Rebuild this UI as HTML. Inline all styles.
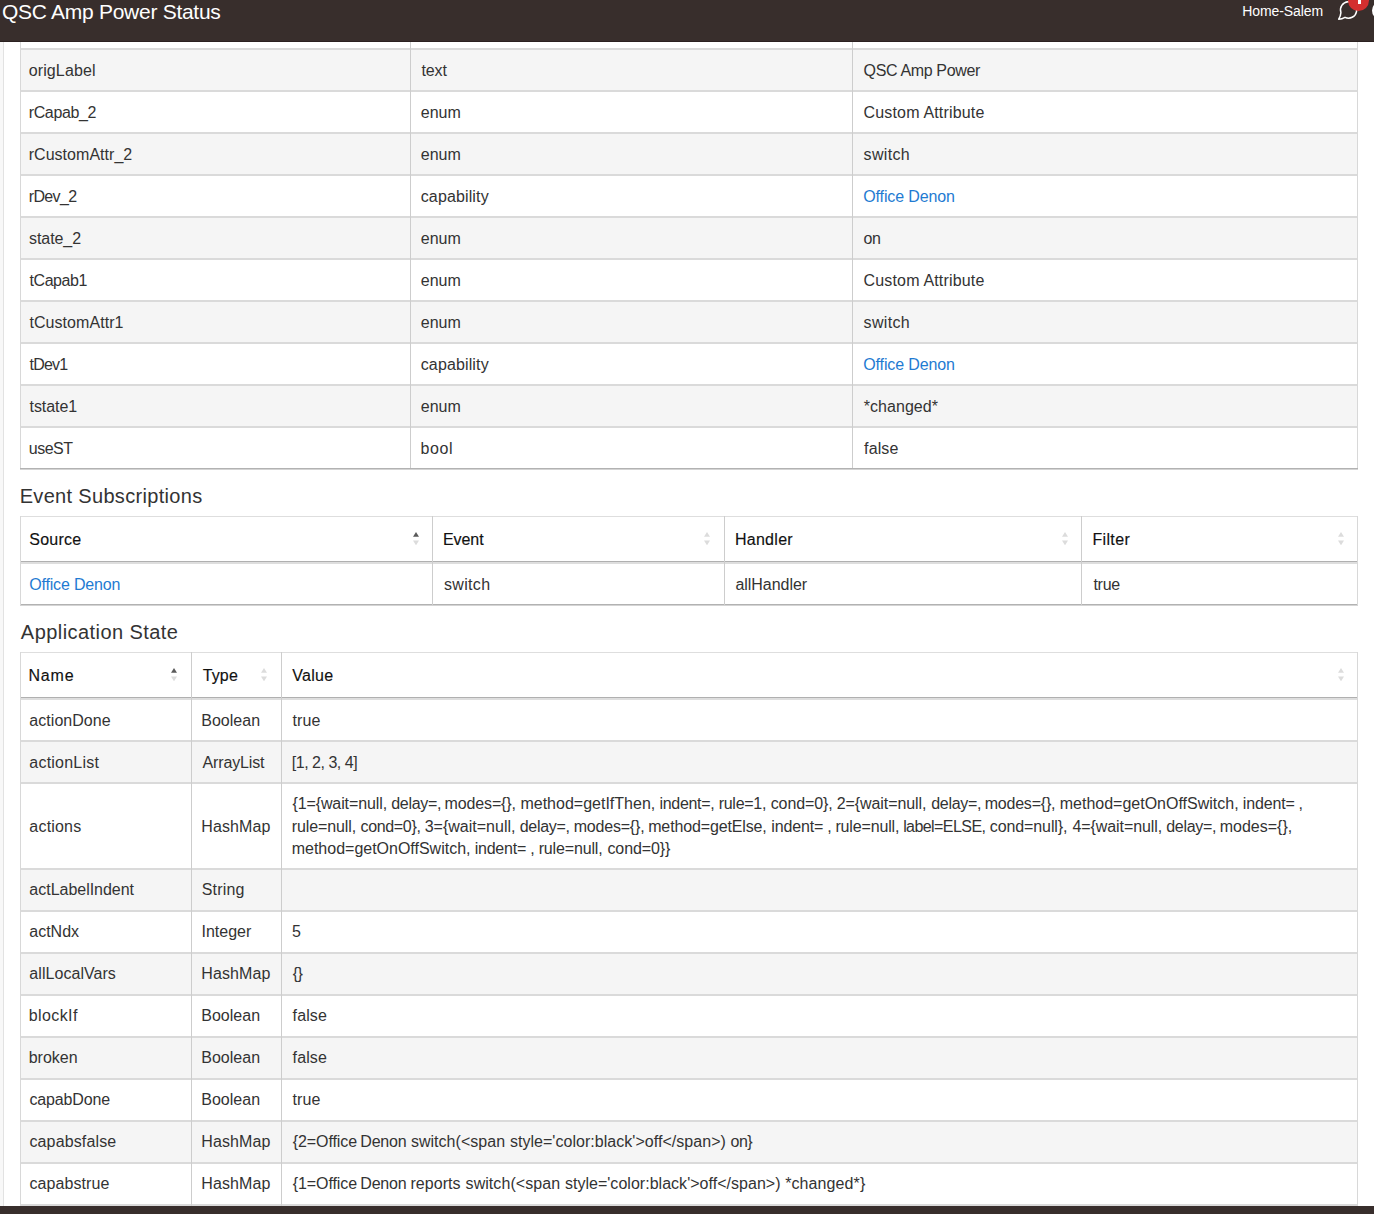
<!DOCTYPE html><html><head><meta charset="utf-8"><title>QSC Amp Power Status</title><style>*{box-sizing:border-box;margin:0;padding:0}
html,body{width:1374px;height:1214px;overflow:hidden;background:#fff}
body{position:relative;font-family:"Liberation Sans", sans-serif;font-size:16px;color:#333}
.a{position:absolute}
.t{position:absolute;white-space:pre;line-height:24px;height:24px}
.h{position:absolute;left:20px;width:1338px;height:2px;background:#dadada}
.v{position:absolute;width:1px;background:#cdcdcd}
.g{position:absolute;left:21px;width:1336px;background:#f5f5f5}
</style></head><body>
<div class="a" style="left:0;top:42px;width:3px;height:1164px;background:#f8f8f8"></div>
<div class="a" style="left:3px;top:42px;width:1px;height:1164px;background:#e2e2e2"></div>
<div class="g" style="top:50px;height:40px"></div>
<div class="g" style="top:134px;height:40px"></div>
<div class="g" style="top:218px;height:40px"></div>
<div class="g" style="top:302px;height:40px"></div>
<div class="g" style="top:386px;height:40px"></div>
<div class="h" style="top:48px"></div>
<div class="h" style="top:90px"></div>
<div class="h" style="top:132px"></div>
<div class="h" style="top:174px"></div>
<div class="h" style="top:216px"></div>
<div class="h" style="top:258px"></div>
<div class="h" style="top:300px"></div>
<div class="h" style="top:342px"></div>
<div class="h" style="top:384px"></div>
<div class="h" style="top:426px"></div>
<div class="h" style="top:468px;height:1px;background:#b2b2b2"></div><div class="h" style="top:469px;height:1px;background:#d4d4d4"></div>
<div class="v" style="left:20px;top:42px;height:426px;background:#d8d8d8"></div>
<div class="v" style="left:410px;top:42px;height:426px"></div>
<div class="v" style="left:852px;top:42px;height:426px"></div>
<div class="v" style="left:1357px;top:42px;height:426px;background:#d8d8d8"></div>
<div class="h" style="top:516px;height:1px;background:#dedede"></div>
<div class="h" style="top:561px;height:1px;background:#b0b0b0"></div>
<div class="h" style="top:562px;height:2px;background:#dedede"></div>
<div class="h" style="top:604px;height:1px;background:#b2b2b2"></div><div class="h" style="top:605px;height:1px;background:#d4d4d4"></div>
<div class="v" style="left:20px;top:516px;height:89px;background:#d8d8d8"></div>
<div class="v" style="left:432px;top:516px;height:89px"></div>
<div class="v" style="left:724px;top:516px;height:89px"></div>
<div class="v" style="left:1081px;top:516px;height:89px"></div>
<div class="v" style="left:1357px;top:516px;height:89px;background:#d8d8d8"></div>
<svg class="a" style="left:412.8px;top:532.2px" width="6" height="14" viewBox="0 0 6 14"><path d="M3 0L6 4.700H0Z" fill="#5a5a5a"/><path d="M0 8.500H6L3 13.300Z" fill="#dcdcdc"/></svg>
<svg class="a" style="left:704.4px;top:532.2px" width="6" height="14" viewBox="0 0 6 14"><path d="M3 0L6 4.700H0Z" fill="#dcdcdc"/><path d="M0 8.500H6L3 13.300Z" fill="#dcdcdc"/></svg>
<svg class="a" style="left:1062.0px;top:532.2px" width="6" height="14" viewBox="0 0 6 14"><path d="M3 0L6 4.700H0Z" fill="#dcdcdc"/><path d="M0 8.500H6L3 13.300Z" fill="#dcdcdc"/></svg>
<svg class="a" style="left:1337.6px;top:532.2px" width="6" height="14" viewBox="0 0 6 14"><path d="M3 0L6 4.700H0Z" fill="#dcdcdc"/><path d="M0 8.500H6L3 13.300Z" fill="#dcdcdc"/></svg>
<div class="h" style="top:652px;height:1px;background:#dedede"></div>
<div class="h" style="top:697px;height:1px;background:#b0b0b0"></div>
<div class="h" style="top:698px;height:2px;background:#dedede"></div>
<svg class="a" style="left:171.4px;top:668.2px" width="6" height="14" viewBox="0 0 6 14"><path d="M3 0L6 4.700H0Z" fill="#5a5a5a"/><path d="M0 8.500H6L3 13.300Z" fill="#dcdcdc"/></svg>
<svg class="a" style="left:261.2px;top:668.2px" width="6" height="14" viewBox="0 0 6 14"><path d="M3 0L6 4.700H0Z" fill="#dcdcdc"/><path d="M0 8.500H6L3 13.300Z" fill="#dcdcdc"/></svg>
<svg class="a" style="left:1337.6px;top:668.2px" width="6" height="14" viewBox="0 0 6 14"><path d="M3 0L6 4.700H0Z" fill="#dcdcdc"/><path d="M0 8.500H6L3 13.300Z" fill="#dcdcdc"/></svg>
<div class="h" style="top:740px"></div>
<div class="g" style="top:742px;height:40px"></div>
<div class="h" style="top:782px"></div>
<div class="h" style="top:868px"></div>
<div class="g" style="top:870px;height:40px"></div>
<div class="h" style="top:910px"></div>
<div class="h" style="top:952px"></div>
<div class="g" style="top:954px;height:40px"></div>
<div class="h" style="top:994px"></div>
<div class="h" style="top:1036px"></div>
<div class="g" style="top:1038px;height:40px"></div>
<div class="h" style="top:1078px"></div>
<div class="h" style="top:1120px"></div>
<div class="g" style="top:1122px;height:40px"></div>
<div class="h" style="top:1162px"></div>
<div class="h" style="top:1204px"></div>
<div class="v" style="left:20px;top:652px;height:554px;background:#d8d8d8"></div>
<div class="v" style="left:191px;top:652px;height:554px"></div>
<div class="v" style="left:281px;top:652px;height:554px"></div>
<div class="v" style="left:1357px;top:652px;height:554px;background:#d8d8d8"></div>
<div class="t" id="t2" style="left:28.76px;top:58.71px;letter-spacing:0.110px">origLabel</div>
<div class="t" id="t3" style="left:421.52px;top:58.71px;letter-spacing:-0.135px">text</div>
<div class="t" id="t4" style="left:863.62px;top:58.71px;letter-spacing:-0.354px">QSC Amp Power</div>
<div class="t" id="t5" style="left:28.72px;top:100.71px;letter-spacing:-0.369px">rCapab_2</div>
<div class="t" id="t6" style="left:420.77px;top:100.71px;letter-spacing:0.030px">enum</div>
<div class="t" id="t7" style="left:863.44px;top:100.71px;letter-spacing:0.179px">Custom Attribute</div>
<div class="t" id="t8" style="left:28.71px;top:142.71px;letter-spacing:0.035px">rCustomAttr_2</div>
<div class="t" id="t9" style="left:420.77px;top:142.71px;letter-spacing:0.030px">enum</div>
<div class="t" id="t10" style="left:863.62px;top:142.71px;letter-spacing:0.329px">switch</div>
<div class="t" id="t11" style="left:28.72px;top:184.71px;letter-spacing:-0.652px">rDev_2</div>
<div class="t" id="t12" style="left:420.73px;top:184.71px;letter-spacing:0.134px">capability</div>
<div class="t" id="t13" style="left:863.29px;top:184.71px;color:#1f7bd2;letter-spacing:-0.136px">Office Denon</div>
<div class="t" id="t14" style="left:29.04px;top:226.71px;letter-spacing:-0.082px">state_2</div>
<div class="t" id="t15" style="left:420.77px;top:226.71px;letter-spacing:0.030px">enum</div>
<div class="t" id="t16" style="left:863.53px;top:226.71px;letter-spacing:-0.447px">on</div>
<div class="t" id="t17" style="left:29.52px;top:268.71px;letter-spacing:-0.443px">tCapab1</div>
<div class="t" id="t18" style="left:420.77px;top:268.71px;letter-spacing:0.030px">enum</div>
<div class="t" id="t19" style="left:863.44px;top:268.71px;letter-spacing:0.179px">Custom Attribute</div>
<div class="t" id="t20" style="left:29.52px;top:310.71px;letter-spacing:0.049px">tCustomAttr1</div>
<div class="t" id="t21" style="left:420.77px;top:310.71px;letter-spacing:0.030px">enum</div>
<div class="t" id="t22" style="left:863.62px;top:310.71px;letter-spacing:0.329px">switch</div>
<div class="t" id="t23" style="left:29.52px;top:352.71px;letter-spacing:-0.793px">tDev1</div>
<div class="t" id="t24" style="left:420.73px;top:352.71px;letter-spacing:0.134px">capability</div>
<div class="t" id="t25" style="left:863.29px;top:352.71px;color:#1f7bd2;letter-spacing:-0.136px">Office Denon</div>
<div class="t" id="t26" style="left:29.52px;top:394.71px;letter-spacing:-0.046px">tstate1</div>
<div class="t" id="t27" style="left:420.77px;top:394.71px;letter-spacing:0.030px">enum</div>
<div class="t" id="t28" style="left:863.77px;top:394.71px;letter-spacing:0.041px">*changed*</div>
<div class="t" id="t29" style="left:28.80px;top:436.71px;letter-spacing:-0.532px">useST</div>
<div class="t" id="t30" style="left:420.59px;top:436.71px;letter-spacing:0.560px">bool</div>
<div class="t" id="t31" style="left:864.12px;top:436.71px;letter-spacing:0.108px">false</div>
<div class="t" id="t32" style="left:19.68px;top:484.39px;font-size:20px;letter-spacing:0.323px">Event Subscriptions</div>
<div class="t" id="t33" style="left:20.86px;top:620.39px;font-size:20px;letter-spacing:0.436px">Application State</div>
<div class="t" id="t34" style="left:29.27px;top:527.71px;color:#111;letter-spacing:0.248px;-webkit-text-stroke:0.15px #111">Source</div>
<div class="t" id="t35" style="left:442.92px;top:527.71px;color:#111;letter-spacing:-0.058px;-webkit-text-stroke:0.15px #111">Event</div>
<div class="t" id="t36" style="left:734.92px;top:527.71px;color:#111;letter-spacing:0.283px;-webkit-text-stroke:0.15px #111">Handler</div>
<div class="t" id="t37" style="left:1092.43px;top:527.71px;color:#111;letter-spacing:0.346px;-webkit-text-stroke:0.15px #111">Filter</div>
<div class="t" id="t38" style="left:29.21px;top:572.71px;color:#1f7bd2;letter-spacing:-0.181px">Office Denon</div>
<div class="t" id="t39" style="left:443.90px;top:572.71px;letter-spacing:0.345px">switch</div>
<div class="t" id="t40" style="left:735.44px;top:572.71px;letter-spacing:-0.033px">allHandler</div>
<div class="t" id="t41" style="left:1093.44px;top:572.71px;letter-spacing:-0.264px">true</div>
<div class="t" id="t42" style="left:28.40px;top:663.71px;color:#111;letter-spacing:0.819px;-webkit-text-stroke:0.15px #111">Name</div>
<div class="t" id="t43" style="left:202.74px;top:663.71px;color:#111;letter-spacing:0.124px;-webkit-text-stroke:0.15px #111">Type</div>
<div class="t" id="t44" style="left:292.26px;top:663.71px;color:#111;letter-spacing:0.274px;-webkit-text-stroke:0.15px #111">Value</div>
<div class="t" id="t45" style="left:29.36px;top:708.71px;letter-spacing:0.034px">actionDone</div>
<div class="t" id="t46" style="left:201.25px;top:708.71px;letter-spacing:0.023px">Boolean</div>
<div class="t" id="t47" style="left:292.52px;top:708.71px;letter-spacing:0.119px">true</div>
<div class="t" id="t48" style="left:29.36px;top:750.71px;letter-spacing:0.213px">actionList</div>
<div class="t" id="t49" style="left:202.47px;top:750.71px;letter-spacing:-0.131px">ArrayList</div>
<div class="t" id="t50" style="left:291.82px;top:750.71px;letter-spacing:-0.487px">[1, 2, 3, 4]</div>
<div class="t" id="t51" style="left:29.36px;top:814.71px;letter-spacing:0.192px">actions</div>
<div class="t" id="t52" style="left:201.25px;top:814.71px;letter-spacing:0.126px">HashMap</div>
<div class="t" id="t53" style="left:292.41px;top:791.71px;letter-spacing:-0.108px">{1={wait=null, </div>
<div class="t" id="t54" style="left:391.24px;top:791.71px;letter-spacing:-0.311px">delay=, </div>
<div class="t" id="t55" style="left:444.50px;top:791.71px;letter-spacing:-0.126px">modes={}, </div>
<div class="t" id="t56" style="left:520.42px;top:791.71px;letter-spacing:0.005px">method=getIfThen, </div>
<div class="t" id="t57" style="left:659.44px;top:791.71px;letter-spacing:-0.293px">indent=, </div>
<div class="t" id="t58" style="left:718.67px;top:791.71px;letter-spacing:-0.265px">rule=1, </div>
<div class="t" id="t59" style="left:770.73px;top:791.71px;letter-spacing:-0.120px">cond=0}, </div>
<div class="t" id="t60" style="left:836.75px;top:791.71px;letter-spacing:-0.085px">2={wait=null, </div>
<div class="t" id="t61" style="left:931.24px;top:791.71px;letter-spacing:-0.300px">delay=, </div>
<div class="t" id="t62" style="left:984.69px;top:791.71px;letter-spacing:-0.214px">modes={}, </div>
<div class="t" id="t63" style="left:1059.72px;top:791.71px">method=getOnOffSwitch, </div>
<div class="t" id="t64" style="left:1242.86px;top:791.71px;letter-spacing:-0.174px">indent= </div>
<div class="t" id="t65" style="left:1298.61px;top:791.71px">,</div>
<div class="t" id="t66" style="left:291.72px;top:814.71px;letter-spacing:-0.102px">rule=null, </div>
<div class="t" id="t67" style="left:360.60px;top:814.71px;letter-spacing:-0.354px">cond=0}, </div>
<div class="t" id="t68" style="left:424.65px;top:814.71px;letter-spacing:0.009px">3={wait=null, </div>
<div class="t" id="t69" style="left:519.74px;top:814.71px;letter-spacing:-0.311px">delay=, </div>
<div class="t" id="t70" style="left:573.72px;top:814.71px;letter-spacing:-0.206px">modes={}, </div>
<div class="t" id="t71" style="left:648.19px;top:814.71px;letter-spacing:-0.142px">method=getElse, </div>
<div class="t" id="t72" style="left:771.23px;top:814.71px;letter-spacing:-0.124px">indent= </div>
<div class="t" id="t73" style="left:827.14px;top:814.71px;letter-spacing:-0.548px">, </div>
<div class="t" id="t74" style="left:835.42px;top:814.71px;letter-spacing:-0.157px">rule=null, </div>
<div class="t" id="t75" style="left:903.15px;top:814.71px;letter-spacing:-0.572px">label=ELSE, </div>
<div class="t" id="t76" style="left:989.78px;top:814.71px;letter-spacing:-0.099px">cond=null}, </div>
<div class="t" id="t77" style="left:1072.45px;top:814.71px;letter-spacing:-0.077px">4={wait=null, </div>
<div class="t" id="t78" style="left:1166.24px;top:814.71px;letter-spacing:-0.300px">delay=, </div>
<div class="t" id="t79" style="left:1219.69px;top:814.71px;letter-spacing:0.006px">modes={},</div>
<div class="t" id="t80" style="left:291.72px;top:836.71px;letter-spacing:-0.007px">method=getOnOffSwitch, </div>
<div class="t" id="t81" style="left:474.65px;top:836.71px;letter-spacing:-0.223px">indent= </div>
<div class="t" id="t82" style="left:530.22px;top:836.71px;letter-spacing:-0.247px">, </div>
<div class="t" id="t83" style="left:538.69px;top:836.71px;letter-spacing:-0.157px">rule=null, </div>
<div class="t" id="t84" style="left:607.41px;top:836.71px;letter-spacing:-0.089px">cond=0}}</div>
<div class="t" id="t85" style="left:29.36px;top:877.71px;letter-spacing:-0.022px">actLabelIndent</div>
<div class="t" id="t86" style="left:201.75px;top:877.71px;letter-spacing:0.178px">String</div>
<div class="t" id="t87" style="left:29.36px;top:919.71px;letter-spacing:-0.028px">actNdx</div>
<div class="t" id="t88" style="left:201.47px;top:919.71px;letter-spacing:0.011px">Integer</div>
<div class="t" id="t89" style="left:292.05px;top:919.71px">5</div>
<div class="t" id="t90" style="left:29.36px;top:961.71px;letter-spacing:0.049px">allLocalVars</div>
<div class="t" id="t91" style="left:201.25px;top:961.71px;letter-spacing:0.126px">HashMap</div>
<div class="t" id="t92" style="left:292.82px;top:961.71px;letter-spacing:-0.688px">{}</div>
<div class="t" id="t93" style="left:28.73px;top:1003.71px;letter-spacing:0.397px">blockIf</div>
<div class="t" id="t94" style="left:201.25px;top:1003.71px;letter-spacing:0.023px">Boolean</div>
<div class="t" id="t95" style="left:292.61px;top:1003.71px;letter-spacing:0.122px">false</div>
<div class="t" id="t96" style="left:28.72px;top:1045.71px;letter-spacing:-0.023px">broken</div>
<div class="t" id="t97" style="left:201.25px;top:1045.71px;letter-spacing:0.023px">Boolean</div>
<div class="t" id="t98" style="left:292.62px;top:1045.71px;letter-spacing:0.121px">false</div>
<div class="t" id="t99" style="left:29.41px;top:1087.71px;letter-spacing:-0.142px">capabDone</div>
<div class="t" id="t100" style="left:201.25px;top:1087.71px;letter-spacing:0.023px">Boolean</div>
<div class="t" id="t101" style="left:292.52px;top:1087.71px;letter-spacing:0.119px">true</div>
<div class="t" id="t102" style="left:29.40px;top:1129.71px;letter-spacing:0.148px">capabsfalse</div>
<div class="t" id="t103" style="left:201.25px;top:1129.71px;letter-spacing:0.126px">HashMap</div>
<div class="t" id="t104" style="left:292.81px;top:1129.71px;letter-spacing:-0.105px">{2=Office </div>
<div class="t" id="t105" style="left:360.32px;top:1129.71px;letter-spacing:-0.234px">Denon </div>
<div class="t" id="t106" style="left:410.88px;top:1129.71px;letter-spacing:0.033px">switch(&lt;span </div>
<div class="t" id="t107" style="left:509.90px;top:1129.71px;letter-spacing:0.038px">style='color:black'&gt;off&lt;/span&gt;) </div>
<div class="t" id="t108" style="left:730.45px;top:1129.71px;letter-spacing:-0.436px">on}</div>
<div class="t" id="t109" style="left:29.41px;top:1171.71px;letter-spacing:0.094px">capabstrue</div>
<div class="t" id="t110" style="left:201.25px;top:1171.71px;letter-spacing:0.126px">HashMap</div>
<div class="t" id="t111" style="left:292.81px;top:1171.71px;letter-spacing:-0.105px">{1=Office </div>
<div class="t" id="t112" style="left:360.32px;top:1171.71px;letter-spacing:-0.234px">Denon </div>
<div class="t" id="t113" style="left:410.50px;top:1171.71px;letter-spacing:0.044px">reports </div>
<div class="t" id="t114" style="left:465.57px;top:1171.71px;letter-spacing:0.063px">switch(&lt;span </div>
<div class="t" id="t115" style="left:564.90px;top:1171.71px;letter-spacing:0.026px">style='color:black'&gt;off&lt;/span&gt;) </div>
<div class="t" id="t116" style="left:785.21px;top:1171.71px;letter-spacing:0.093px">*changed*}</div>
<div class="a" style="left:0;top:0;width:1374px;height:42px;background:#382e2c"></div>
<div class="a" style="left:0;top:41px;width:1374px;height:1px;background:#2b2120"></div>
<svg class="a" style="left:1334px;top:0" width="30" height="24" viewBox="0 0 30 24"><path d="M6.9 12.6A8.1 8.15 0 1 1 11 17.3Q8 19 4.7 19.2Q6.7 16 6.900 12.600Z" fill="none" stroke="#fff" stroke-width="1.5" stroke-linejoin="round"/></svg>
<div class="a" style="left:1348px;top:-10px;width:21.2px;height:21.2px;border-radius:50%;background:#d32f2f"></div>
<div class="a" style="left:1358px;top:-4px;width:3.2px;height:7.9px;background:#fff"></div>
<div class="a" style="left:1371.5px;top:1.4px;width:19px;height:19px;border-radius:50%;border:2px solid #fff"></div>
<div class="a" style="left:0;top:1206px;width:1374px;height:8px;background:#382e2c"></div>
<div class="t" id="t0" style="left:2.07px;top:0.06px;font-size:21px;color:#fff;letter-spacing:-0.282px">QSC Amp Power Status</div>
<div class="t" id="t1" style="left:1242.28px;top:-0.63px;font-size:14px;color:#fff;letter-spacing:-0.086px">Home-Salem</div>
</body></html>
